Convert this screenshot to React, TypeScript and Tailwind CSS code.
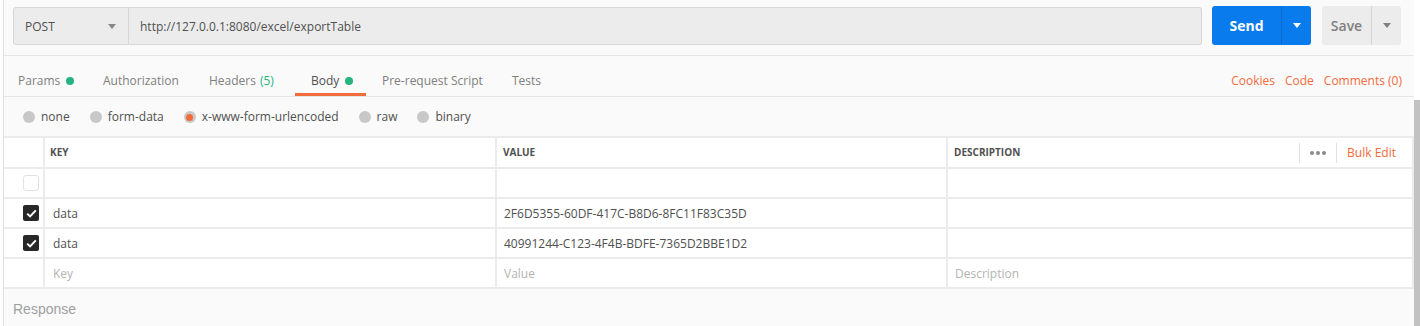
import { Fragment } from "react";

const font = { fontFamily: '"Open Sans", "Liberation Sans", sans-serif' };

function Caret({ className }: { className: string }) {
  return (
    <svg width="8" height="5" viewBox="0 0 8 5" className={className}>
      <path d="M0 0h8L4 5z" fill="currentColor" />
    </svg>
  );
}

function Dot() {
  return <span className="ml-[6px] inline-block h-[8px] w-[8px] rounded-full bg-[#26b47f]" />;
}

function CheckBox({ checked }: { checked: boolean }) {
  if (!checked) {
    return <span className="block h-[16px] w-[16px] rounded-[3px] border border-[#e2e2e2] bg-white" />;
  }
  return (
    <span className="flex h-[16px] w-[16px] items-center justify-center rounded-[2px] bg-[#282828]">
      <svg width="11" height="9" viewBox="0 0 11 9">
        <path d="M1.2 4.6l2.9 2.8L9.8 1.4" stroke="white" strokeWidth="2" fill="none" />
      </svg>
    </span>
  );
}

const tabs = [
  { label: "Params", dot: true, w: "w-[83px] pl-[14px]" },
  { label: "Authorization", w: "w-[106px] pl-[16px]" },
  { label: "Headers", count: "(5)", w: "w-[102px] pl-[16px]" },
  { label: "Body", dot: true, active: true, w: "w-[71px] pl-[16px]" },
  { label: "Pre-request Script", w: "w-[130px] pl-[16px]" },
  { label: "Tests", w: "w-[64px] pl-[16px]" },
];

const bodyTypes = ["none", "form-data", "x-www-form-urlencoded", "raw", "binary"];

const rows = [
  { checked: false, key: "", value: "", desc: "", box: true },
  { checked: true, key: "data", value: "2F6D5355-60DF-417C-B8D6-8FC11F83C35D", desc: "", box: true },
  { checked: true, key: "data", value: "40991244-C123-4F4B-BDFE-7365D2BBE1D2", desc: "", box: true },
  { checked: false, key: "Key", value: "Value", desc: "Description", box: false, placeholder: true },
];

const cols = "grid grid-cols-[41px_452px_451px_1fr]";

export default function App() {
  return (
    <div style={font} className="relative flex h-[326px] w-[1420px] overflow-hidden bg-white text-[12px] text-[#505050]">
      <div className="w-[3px] shrink-0 bg-white" />
      <div className="flex w-[1411px] shrink-0 flex-col border-l border-[#e0e0e0] bg-[#fafafa]">
        {/* request bar */}
        <div className="flex h-[56px] items-start border-b border-[#e6e6e6] pl-[9px] pt-[6px]">
          <div className="mt-[1px] flex h-[38px] w-[116px] items-center justify-between rounded-l-[3px] border border-[#d6d6d6] bg-[#ececec] pl-[11px] pr-[12px] pt-[1px]">
            <span className="text-[12px] text-[#505050]">POST</span>
            <Caret className="text-[#888]" />
          </div>
          <div className="mt-[1px] flex h-[38px] w-[1073px] items-center rounded-r-[3px] border border-l-0 border-[#d6d6d6] bg-[#ececec] pl-[11px] pt-[1px]">
            <span className="text-[12px] text-[#505050]">http://127.0.0.1:8080/excel/exportTable</span>
          </div>
          <div className="ml-[10px] flex h-[39px] w-[99px] rounded-[3px] bg-[#097bed] text-white">
            <span className="flex w-[69px] items-center justify-center text-[14px] font-bold">Send</span>
            <span className="flex w-[30px] items-center justify-center border-l border-[#0a6bd0]">
              <Caret className="text-white" />
            </span>
          </div>
          <div className="ml-[11px] flex h-[39px] w-[79px] rounded-[3px] bg-[#ececec] text-[#808080]">
            <span className="flex w-[49px] items-center justify-center text-[14px] font-semibold">Save</span>
            <span className="flex w-[30px] items-center justify-center border-l border-[#d6d6d6]">
              <Caret className="text-[#808080]" />
            </span>
          </div>
        </div>

        {/* tabs */}
        <div className="flex h-[41px] items-stretch justify-between border-b border-[#e6e6e6] pr-[12px]">
          <div className="flex items-stretch">
            {tabs.map((t) => (
              <div
                key={t.label}
                className={`flex items-center pt-[9px] ${t.w} ${
                  t.active ? "border-b-[3px] border-[#f26b3a] pt-[12px] text-[#505050]" : "text-[#808080]"
                }`}
              >
                <span>{t.label}</span>
                {t.count && <span className="ml-[4px] text-[#26b47f]">{t.count}</span>}
                {t.dot && <Dot />}
              </div>
            ))}
          </div>
          <div className="flex items-center gap-[10px] pt-[9px] text-[#f26b3a]">
            <span>Cookies</span>
            <span>Code</span>
            <span>Comments (0)</span>
          </div>
        </div>

        {/* body types */}
        <div className="flex h-[39px] items-center gap-[20px] pl-[19px] pt-[1px]">
          {bodyTypes.map((b) => (
            <label key={b} className="flex items-center gap-[6px]">
              <span className="flex h-[12px] w-[12px] items-center justify-center rounded-full bg-[#c8c8c8]">
                {b === "x-www-form-urlencoded" && <span className="h-[7px] w-[7px] rounded-full bg-[#f26b3a]" />}
              </span>
              <span className="text-[#505050]">{b}</span>
            </label>
          ))}
        </div>

        {/* params table */}
        <div className="border-t-2 border-r-2 border-[#ebebeb]">
          <div className={`${cols} h-[31px] border-b-2 border-[#ebebeb] bg-white`}>
            <div className="border-r-2 border-[#ebebeb]" />
            <div className="flex items-center border-r-2 border-[#ebebeb] pl-[5px] text-[10px] font-bold text-[#505050]">KEY</div>
            <div className="flex items-center border-r-2 border-[#ebebeb] pl-[6px] text-[10px] font-bold text-[#505050]">VALUE</div>
            <div className="flex items-center justify-between pl-[6px] text-[10px] font-bold text-[#505050]">
              <span>DESCRIPTION</span>
              <div className="flex h-full items-center">
                <span className="h-[20px] border-l border-[#e0e0e0]" />
                <span className="flex w-[36px] items-center justify-center gap-[2px]">
                  {[0, 1, 2].map((i) => (
                    <span key={i} className="h-[4px] w-[4px] rounded-full bg-[#8a8a8a]" />
                  ))}
                </span>
                <span className="h-[20px] border-l border-[#e0e0e0]" />
                <span className="pl-[10px] pr-[16px] text-[12px] font-normal text-[#f26b3a]">Bulk Edit</span>
              </div>
            </div>
          </div>
          {rows.map((r, i) => (
            <Fragment key={i}>
              <div className={`${cols} h-[30px] border-b-2 border-[#ebebeb] bg-white`}>
                <div className="flex items-center justify-end border-r-2 border-[#ebebeb] pr-[4px]">
                  {r.box && <CheckBox checked={r.checked} />}
                </div>
                <div className={`flex items-center border-r-2 border-[#ebebeb] pl-[8px] pt-[1px] ${r.placeholder ? "text-[#b3b3b3]" : ""}`}>
                  {r.key}
                </div>
                <div className={`flex items-center border-r-2 border-[#ebebeb] pl-[7px] pt-[1px] ${r.placeholder ? "text-[#b3b3b3]" : ""}`}>
                  {r.value}
                </div>
                <div className={`flex items-center pl-[7px] pt-[1px] ${r.placeholder ? "text-[#b3b3b3]" : ""}`}>{r.desc}</div>
              </div>
            </Fragment>
          ))}
        </div>

        {/* response */}
        <div className="flex flex-1 items-center pl-[9px] pt-[3px] text-[14px] text-[#a0a0a0]" style={{ fontFamily: '"Liberation Sans", sans-serif' }}>
          Response
        </div>
      </div>
      <div className="absolute right-0 top-[100px] h-[226px] w-[6px] bg-[#c2c2c2]" />
    </div>
  );
}
